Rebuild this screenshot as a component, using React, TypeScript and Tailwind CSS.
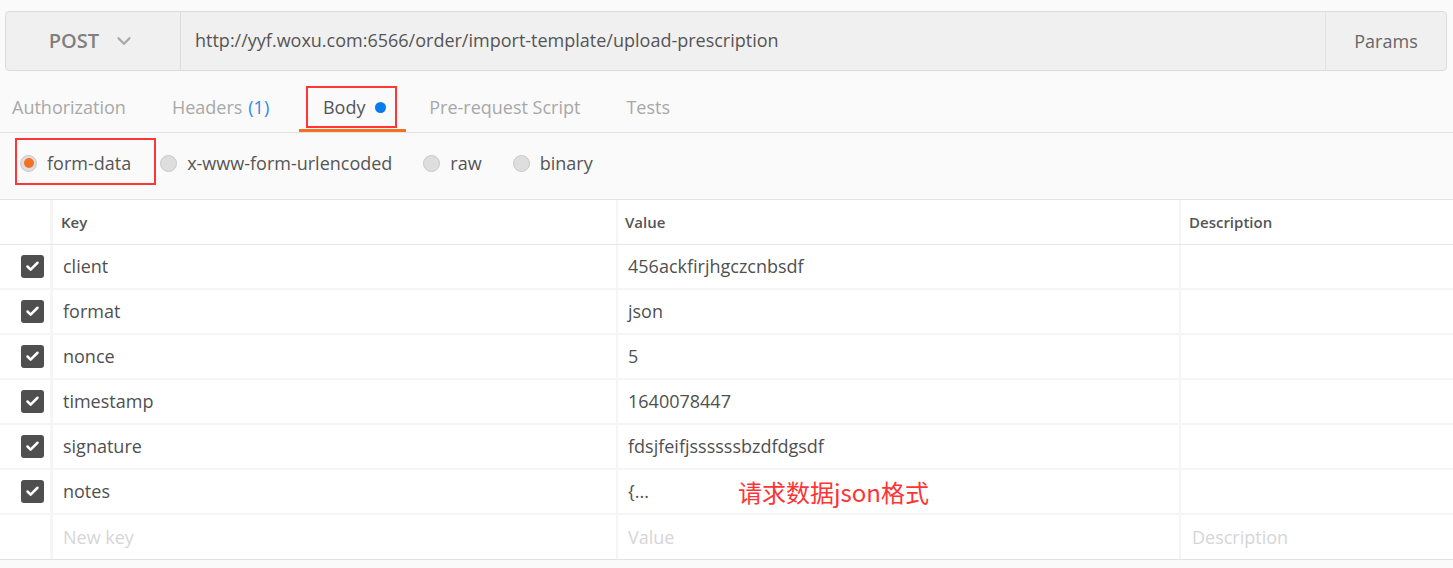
import { Check, ChevronDown } from 'lucide-react';

const rows = [
  { key: 'client', value: '456ackfirjhgczcnbsdf' },
  { key: 'format', value: 'json' },
  { key: 'nonce', value: '5' },
  { key: 'timestamp', value: '1640078447' },
  { key: 'signature', value: 'fdsjfeifjssssssbzdfdgsdf' },
  { key: 'notes', value: '{...', note: '请求数据json格式' },
];

const tabs = [
  { label: 'Authorization' },
  { label: 'Headers', count: '(1)' },
  { label: 'Body', active: true },
  { label: 'Pre-request Script' },
  { label: 'Tests' },
];

function Radio({ label, checked }: { label: string; checked?: boolean }) {
  return (
    <div className="flex items-center gap-[10px]">
      <span className="flex h-[17px] w-[17px] items-center justify-center rounded-full border border-[#c8c8c8] bg-[#dedede]">
        {checked && <span className="h-[10px] w-[10px] rounded-full bg-[#f47023]" />}
      </span>
      <span className="text-[18px] text-[#555]">{label}</span>
    </div>
  );
}

export default function App() {
  return (
    <div className="h-[568px] overflow-hidden bg-[#fafafa] font-['Open_Sans',sans-serif]">
      {/* url bar */}
      <div className="pl-[5px] pr-[6px] pt-[11px]">
        <div className="flex h-[60px] rounded-[4px] border border-[#dcdcdc] bg-[#f0f0f0]">
          <div className="flex w-[175px] items-center justify-center gap-[14px] border-r border-[#dcdcdc] pl-[2px] pr-[4px]">
            <span className="text-[20px] font-semibold text-[#808080]">POST</span>
            <ChevronDown className="h-[22px] w-[22px] text-[#a8a8a8]" strokeWidth={2.5} />
          </div>
          <div className="flex flex-1 items-center pl-[14px] pb-[1px] text-[18px] text-[#555]">
            http://yyf.woxu.com:6566/order/import-template/upload-prescription
          </div>
          <div className="flex w-[121px] items-center justify-center border-l border-[#e2e2e2] text-[18px] text-[#666]">
            Params
          </div>
        </div>
      </div>

      {/* tabs */}
      <div className="flex h-[62px] items-stretch border-b border-[#e2e2e2] pl-[12px]">
        {tabs.map((t, i) => (
          <div
            key={t.label}
            className={`relative flex items-center pt-[12px] ${i === 0 ? 'pr-[46px]' : ''} ${i === 1 ? 'pr-[30px]' : ''} ${i === 2 ? 'w-[107px] justify-center border-b-[3px] border-[#f47023] pl-[4px] pt-[15px]' : ''} ${i === 3 ? 'pl-[23px] pr-[46px]' : ''}`}
          >
            {t.active ? (
              <>
                <span className="absolute left-[7px] top-[15px] h-[42px] w-[91px] border-2 border-[#ff3636]" />
                <span className="pr-[2px] text-[18px] text-[#555]">Body</span>
                <span className="ml-[8px] h-[11px] w-[11px] rounded-full bg-[#097bed]" />
              </>
            ) : (
              <span className="text-[18px] text-[#a8a8a8]">
                {t.label}
                {t.count && <span className="ml-[6px] text-[#2b8be6]">{t.count}</span>}
              </span>
            )}
          </div>
        ))}
      </div>

      {/* body type */}
      <div className="flex h-[66px] items-center gap-[31px] pb-[6px] pl-[20px]">
        <div className="relative">
          <span className="absolute -left-[5px] -top-[12px] h-[47px] w-[141px] border-2 border-[#ff3636]" />
          <Radio label="form-data" checked />
        </div>
        <div className="-ml-[2px]">
          <Radio label="x-www-form-urlencoded" />
        </div>
        <Radio label="raw" />
        <Radio label="binary" />
      </div>

      {/* table */}
      <div className="border-y border-[#e2e2e2] bg-white">
        <div className="grid h-[45px] grid-cols-[53px_565px_563px_1fr] border-b border-[#e6e6e6] text-[15px] font-semibold text-[#555]">
          <div className="border-r-[3px] border-[#f5f5f5]" />
          <div className="flex items-center border-r-2 border-[#f5f5f5] pl-[8px]">Key</div>
          <div className="flex items-center border-r-2 border-[#f5f5f5] pl-[7px]">Value</div>
          <div className="flex items-center pl-[8px]">Description</div>
        </div>
        {rows.map(r => (
          <div
            key={r.key}
            className="grid h-[45px] grid-cols-[53px_565px_563px_1fr] border-b-2 border-[#f5f5f5] text-[18px] text-[#505050]"
          >
            <div className="flex items-center justify-end border-r-[3px] border-[#f5f5f5] pr-[6px]">
              <span className="flex h-[23px] w-[23px] items-center justify-center rounded-[3px] bg-[#4f4f4f]">
                <Check className="h-[15px] w-[15px] text-white" strokeWidth={4} />
              </span>
            </div>
            <div className="flex items-center border-r-2 border-[#f5f5f5] pl-[10px]">{r.key}</div>
            <div className="flex items-center border-r-2 border-[#f5f5f5] pl-[10px]">
              <span>{r.value}</span>
              {r.note && (
                <span className="ml-[89px] font-['Noto_Sans_CJK_SC',sans-serif] text-[24px] leading-none text-[#ff3333]">
                  {r.note}
                </span>
              )}
            </div>
            <div />
          </div>
        ))}
        <div className="grid h-[44px] grid-cols-[53px_565px_563px_1fr] text-[18px] text-[#d6d6d6]">
          <div className="border-r-[3px] border-[#f5f5f5]" />
          <div className="flex items-center border-r-2 border-[#f5f5f5] pl-[10px]">New key</div>
          <div className="flex items-center border-r-2 border-[#f5f5f5] pl-[10px]">Value</div>
          <div className="flex items-center pl-[11px]">Description</div>
        </div>
      </div>
    </div>
  );
}
